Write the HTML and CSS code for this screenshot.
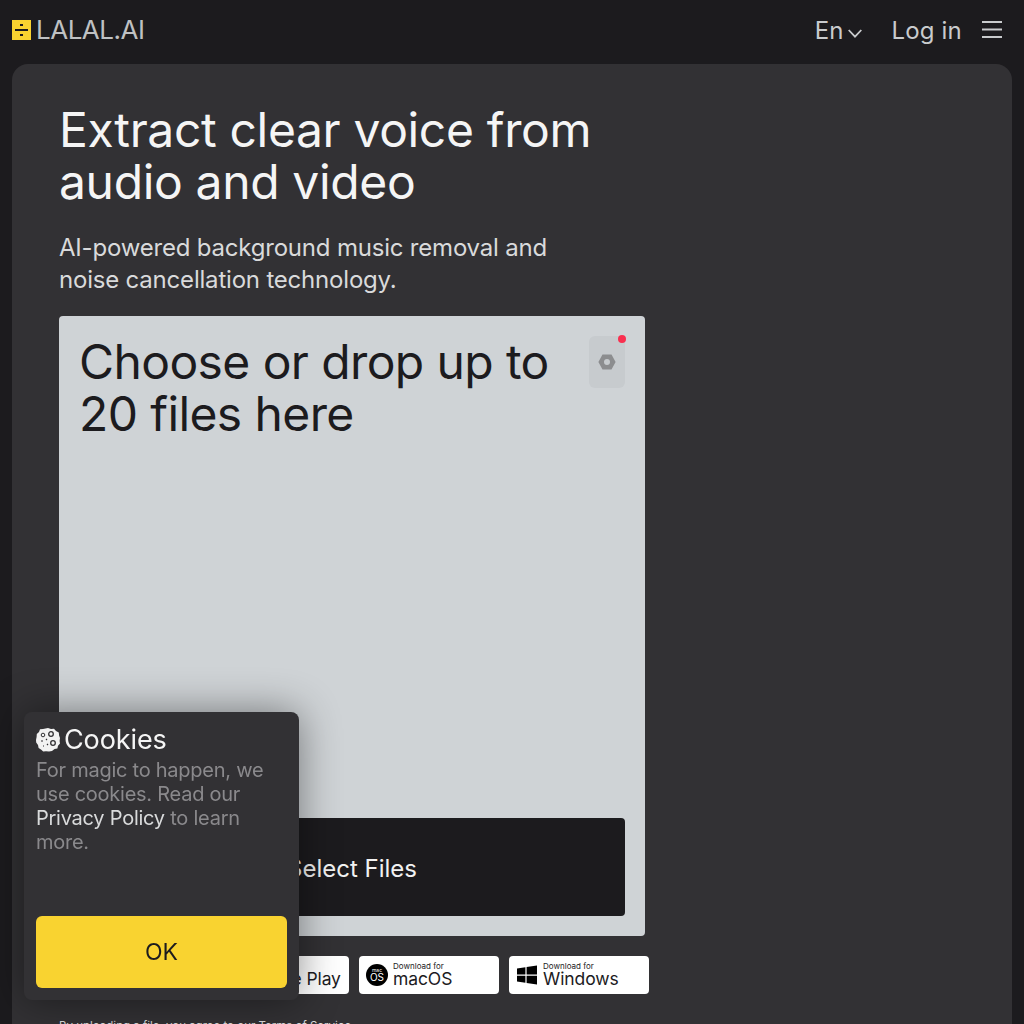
FILE: index.html
```html
<!DOCTYPE html>
<html lang="en">
<head>
<meta charset="utf-8">
<title>LALAL.AI</title>
<link rel="stylesheet" href="styles.css">
</head>
<body>
<header class="topbar">
  <a class="brand">
    <svg class="brand-mark" viewBox="0 0 19 20"><rect width="19" height="20" fill="#f9d330"/><rect x="3" y="9" width="13" height="2" fill="#1c1b1e"/><rect x="8" y="4" width="3" height="2" fill="#1c1b1e"/><rect x="8" y="14" width="3" height="2" fill="#1c1b1e"/></svg>
    <span class="brand-name">LALAL.AI</span>
  </a>
  <nav class="topnav">
    <span class="lang">En<svg class="chev" viewBox="0 0 14 9"><path d="M.7 1 7 7.700 13.300 1" fill="none" stroke="currentColor" stroke-width="1.800"/></svg></span>
    <span class="login">Log in</span>
    <svg class="burger" viewBox="0 0 20 18"><path d="M0 1h20M0 8.500h20M0 16h20" stroke="currentColor" stroke-width="2" fill="none"/></svg>
  </nav>
</header>
<main class="panel">
  <h1 class="headline">Extract clear voice from<br>audio and video</h1>
  <p class="lede">AI-powered background music removal and<br>noise cancellation technology.</p>
  <section class="dropzone">
    <div class="drop-head">
      <h2 class="drop-title">Choose or drop up to<br>20 files here</h2>
      <div class="settings">
        <svg class="nut" viewBox="0 0 18 16"><path fill-rule="evenodd" d="M4.500.5h9L17.600 8l-4.100 7.500h-9L.4 8zM9 5a3 3 0 1 0 0 6 3 3 0 0 0 0-6z" fill="#8c8d8f"/></svg>
        <span class="dot"></span>
      </div>
    </div>
    <button class="select">Select Files</button>
  </section>
  <div class="stores">
    <a class="store store-play">
      <svg class="store-icon" viewBox="0 0 24 24"><path d="M4 2l16 10L4 22z" fill="#000"/></svg>
      <span class="store-text"><small>Get it on</small><b>Google Play</b></span>
    </a>
    <a class="store">
      <svg class="store-icon" viewBox="0 0 22 22"><circle cx="11" cy="11" r="11" fill="#000"/></svg>
      <span class="os-label"><i>mac</i>OS</span>
      <span class="store-text"><small>Download for</small><b>macOS</b></span>
    </a>
    <a class="store store-win">
      <svg class="store-icon" viewBox="0 0 20 20"><path d="M0 3.500l8.400-1.300v7.300H0zM9.600 2 20 .4v9.100H9.600zM0 10.700h8.400v7.100L0 16.500zM9.600 10.700H20v8.900L9.600 18z" fill="#000"/></svg>
      <span class="store-text"><small>Download for</small><b>Windows</b></span>
    </a>
  </div>
  <p class="terms">By uploading a file, you agree to our Terms of Service</p>
</main>
<aside class="cookies">
  <h3 class="cookie-title">
    <svg class="cookie-icon" viewBox="0 0 24 24"><path d="M12 0l3 1 3-.2 2 2.200 2.800 1.500.3 3L24 10l-.4 3 .4 2.500-2 2.200-.6 2.800-2.800.6L16 23l-3 .6-3-.3-2.800.3L5 21.500 2.600 20 2 17 .2 14.500 0 12l.6-3L.8 6 3 4l1-2.800L7 1z" fill="#f2f2f2"/><circle cx="7" cy="7" r="1.800" fill="none" stroke="#323134"/><circle cx="15" cy="6" r="2.300" fill="none" stroke="#323134" stroke-width="1.300"/><circle cx="17" cy="15" r="2.300" fill="none" stroke="#323134" stroke-width="1.300"/><path d="M5 13h2M10 11l1 1M11 16l1 1M7 18h1" stroke="#323134" stroke-width="1.200"/></svg>
    Cookies
  </h3>
  <p class="cookie-text">For magic to happen, we use cookies. Read our <a class="cookie-link">Privacy Policy</a> to learn more.</p>
  <button class="cookie-ok">OK</button>
</aside>
</body>
</html>
```
FILE: styles.css
```css
* { box-sizing: border-box; }
html, body { height: 1024px; overflow: hidden; }
body { margin: 0; background: #1c1b1e; color: #f2f2f2; font-family: "Inter", "Liberation Sans", sans-serif; }

.topbar { height: 64px; display: flex; align-items: center; justify-content: space-between; padding: 0 22px 4px 12px; }
.brand { display: flex; align-items: center; gap: 5px; }
.brand-mark { width: 19px; height: 20px; display: block; }
.brand-name { font-size: 26px; line-height: 32px; color: #bfc1c3; letter-spacing: -0.5px; }
.topnav { display: flex; align-items: center; color: #c9cbcd; font-size: 24px; }
.lang { display: flex; align-items: center; gap: 5px; margin-right: 29px; }
.chev { width: 14px; height: 9px; margin-top: 6px; }
.login { margin-right: 20px; letter-spacing: 0.2px; }
.burger { width: 20px; height: 18px; display: block; }

.panel { margin: 0 12px; padding: 40px 47px 0; background: #323134; border-radius: 16px 16px 0 0; height: 960px; }
.headline { margin: 0; font-size: 48px; line-height: 52px; font-weight: 400; color: #f5f5f5; letter-spacing: -0.35px; }
.lede { margin: 24px 0 0; font-size: 24px; line-height: 32px; color: #d9dadb; letter-spacing: -0.2px; }

.dropzone { margin-top: 20px; width: 586px; height: 620px; background: #cfd3d6; border-radius: 4px; padding: 20px; display: flex; flex-direction: column; justify-content: space-between; }
.drop-head { display: flex; justify-content: space-between; align-items: flex-start; }
.drop-title { margin: 0; font-size: 48px; line-height: 52px; font-weight: 400; color: #1c1b1e; letter-spacing: -0.6px; }
.settings { position: relative; width: 36px; height: 52px; background: #c7cbce; border-radius: 6px; display: flex; align-items: center; justify-content: center; }
.nut { width: 18px; height: 16px; }
.dot { position: absolute; top: -1px; right: -1px; width: 8px; height: 8px; border-radius: 50%; background: #f92f4f; }
.select { height: 98px; width: 100%; background: #1c1b1e; border: 0; border-radius: 4px; padding-top: 4px; color: #f2f2f2; font: inherit; font-size: 24px; margin-top: auto; }

.stores { display: flex; gap: 10px; margin-top: 20px; width: 590px; }
.store { position: relative; width: 140px; height: 38px; background: #fff; border-radius: 4px; display: flex; align-items: center; gap: 5px; padding: 0 7px; color: #1c1b1e; white-space: nowrap; }
.store-play { margin-left: 150px; }
.store-win { gap: 6px; padding-left: 8px; }
.store-win .store-icon { width: 20px; height: 20px; }
.store-icon { width: 22px; height: 22px; flex: none; }
.store-text { display: flex; flex-direction: column; margin-bottom: 4px; }
.store-text small { font-size: 8px; line-height: 8px; margin-top: 3px; }
.store-text b { font-weight: 400; font-size: 17.5px; line-height: 17px; letter-spacing: -0.1px; }
.os-label { position: absolute; left: 7px; top: 8px; width: 22px; height: 22px; display: flex; flex-direction: column; align-items: center; justify-content: center; color: #fff; font-size: 10px; line-height: 9px; }
.os-label i { font-style: normal; font-size: 5px; line-height: 5px; }

.terms { margin: 25px 0 0; font-size: 11.5px; line-height: 14px; color: #d9dadb; }

.cookies { position: fixed; left: 24px; top: 712px; width: 275px; height: 288px; padding: 12px; background: #323134; border-radius: 8px; box-shadow: 0 0 40px rgba(0,0,0,.45); display: flex; flex-direction: column; }
.cookie-title { margin: 1px 0 0; display: flex; align-items: center; gap: 4px; font-size: 27px; line-height: 30px; font-weight: 400; color: #f5f5f5; letter-spacing: -0.1px; }
.cookie-icon { width: 24px; height: 24px; }
.cookie-text { margin: 3px 0 0; font-size: 20px; line-height: 24px; color: #8a898c; letter-spacing: -0.25px; }
.cookie-link { color: #d9dadb; }
.cookie-ok { margin-top: auto; height: 72px; background: #f9d330; border: 0; border-radius: 6px; color: #1c1b1e; font: inherit; font-size: 23px; }
```
